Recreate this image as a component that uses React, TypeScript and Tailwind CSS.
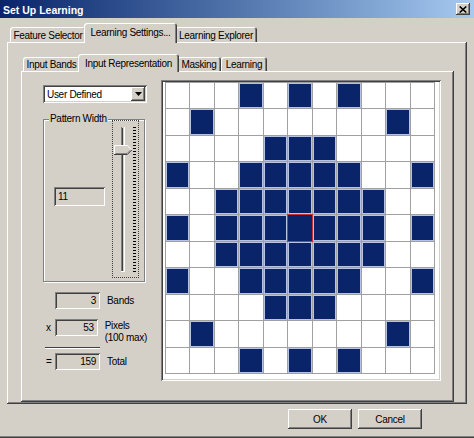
import React from "react";

const rows = [
  "...X.X.X...",
  ".X.......X.",
  "....XXX....",
  "X..XXXXX..X",
  "..XXXXXXX..",
  "X.XXXXXXX.X",
  "..XXXXXXX..",
  "X..XXXXX..X",
  "....XXX....",
  ".X.......X.",
  "...X.X.X...",
];

const sunken =
  "shadow-[inset_1px_1px_0_#808080,inset_-1px_-1px_0_#ffffff,inset_2px_2px_0_#404040,inset_-2px_-2px_0_#d4d0c8]";
const raised =
  "shadow-[inset_-1px_-1px_0_#404040,inset_1px_1px_0_#ffffff,inset_-2px_-2px_0_#808080,inset_2px_2px_0_#d4d0c8]";
const tabEdge =
  "rounded-t-[3px] shadow-[inset_1px_1px_0_#ffffff,inset_-1px_0_0_#404040,inset_-2px_0_0_#808080]";

function Tab({ label, cls, selected }: { label: string; cls: string; selected?: boolean }) {
  return (
    <div
      className={`${cls} ${tabEdge} bg-[#d4d0c8] flex justify-center whitespace-nowrap ${
        selected ? "relative z-10 -mx-[2px] -mb-px items-start pt-[3px]" : "items-center pt-px"
      }`}
    >
      {label}
    </div>
  );
}

function Slider() {
  const ticks = [];
  for (let i = 0; i < 49; i++) {
    ticks.push(<rect key={i} x={20} y={6 + i * 3} width={3} height={1} fill="#000" />);
  }
  return (
    <div className="ml-[7px] w-[27px] h-[158px] border border-dotted border-[#404040]">
      <svg width="25" height="156" viewBox="0 0 25 156" className="block">
        <rect x={8} y={6} width={1} height={145} fill="#808080" />
        <rect x={9} y={7} width={1} height={143} fill="#404040" />
        <rect x={11} y={6} width={1} height={145} fill="#ffffff" />
        <rect x={8} y={150} width={4} height={1} fill="#ffffff" />
        {ticks}
        <g transform="translate(1,24)">
          <polygon points="0,0 13,0 17.5,4.5 13,9 0,9" fill="#d4d0c8" />
          <polyline points="0.5,9 0.5,0.5 13.3,0.5 17.3,4.5" fill="none" stroke="#ffffff" strokeWidth="1" />
          <polyline points="0,9.5 13.3,9.5 17.8,5" fill="none" stroke="#404040" strokeWidth="1" />
          <polyline points="1.5,8.5 13,8.5 16.3,5.2" fill="none" stroke="#808080" strokeWidth="1" />
        </g>
      </svg>
    </div>
  );
}

export default function App() {
  return (
    <div className="w-[474px] h-[438px] bg-[#d4d0c8] flex flex-col overflow-hidden text-[10px] leading-[13px] tracking-[-0.3px] text-black font-['Liberation_Sans',Arial,sans-serif] shadow-[inset_0_-1px_0_#404040,inset_0_-2px_0_#808080]">
      {/* Title bar */}
      <div className="h-[18px] flex items-center justify-between pl-[3px] pr-[4px] bg-linear-to-r from-[#0a246a] to-[#a6caf0]">
        <span className="font-bold text-white text-[10.5px] tracking-[0px] pt-[2px]">Set Up Learning</span>
        <div className={`w-[14px] h-[12px] bg-[#d4d0c8] ${raised} flex items-center justify-center`}>
          <svg width="8" height="7" viewBox="0 0 8 7">
            <path d="M0.7 0.5L7.3 6.5M7.3 0.5L0.7 6.5" stroke="#000" strokeWidth="1.6" />
          </svg>
        </div>
      </div>

      <div className="pl-[7px]">
        {/* Outer tabs */}
        <div className="h-[24px] flex items-end pl-[3px]">
          <Tab label="Feature Selector" cls="w-[76px] h-[15px]" />
          <Tab label="Learning Settings..." cls="w-[93px] h-[20px]" selected />
          <Tab label="Learning Explorer" cls="w-[82px] h-[15px]" />
        </div>

        {/* Outer panel */}
        <div className={`w-[460px] h-[362px] ${raised} pl-[14px] flex flex-col`}>
          <div className="h-[29px] flex items-end pl-[2px]">
            <Tab label="Input Bands" cls="w-[57px] h-[14px]" />
            <Tab label="Input Representation" cls="w-[101px] h-[18px]" selected />
            <Tab label="Masking" cls="w-[44px] h-[14px]" />
            <Tab label="Learning" cls="w-[46px] h-[14px]" />
          </div>

          {/* Inner panel */}
          <div className={`w-[433px] h-[331px] ${raised} pl-[22px] flex items-start`}>
            {/* Left column */}
            <div className="mt-[14px] w-[104px] flex flex-col">
              <div className={`h-[18px] bg-white ${sunken} flex items-center pl-[4px] pr-[2px]`}>
                <span className="flex-1">User Defined</span>
                <div className={`w-[14px] h-[14px] bg-[#d4d0c8] ${raised} flex items-center justify-center`}>
                  <svg width="7" height="4" viewBox="0 0 7 4">
                    <path d="M0 0H7L3.5 4Z" fill="#000" />
                  </svg>
                </div>
              </div>

              <div className="relative mt-[16px] w-[102px] h-[163px] border border-[#808080] shadow-[1px_1px_0_#ffffff,inset_1px_1px_0_#ffffff] flex items-start">
                <span className="absolute left-[5px] -top-[8px] px-[1px] bg-[#d4d0c8] whitespace-nowrap">
                  Pattern Width
                </span>
                <div className={`ml-[10px] mt-[67px] w-[51px] h-[19px] ${sunken} flex items-center pl-[4px]`}>
                  11
                </div>
                <Slider />
              </div>

              <div className="mt-[10px] flex items-start">
                <span className="w-[12px]" />
                <div className={`w-[45px] h-[17px] ${sunken} flex items-center justify-end pr-[4px]`}>3</div>
                <span className="ml-[7px] leading-[17px]">Bands</span>
              </div>

              <div className="mt-[10px] flex items-start">
                <span className="w-[12px] leading-[17px] pl-[3px]">x</span>
                <div className={`w-[45px] h-[17px] ${sunken} flex items-center justify-end pr-[4px]`}>53</div>
                <div className="ml-[7px] flex flex-col pt-[1px] leading-[12px] whitespace-nowrap">
                  <span>Pixels</span>
                  <span>(100 max)</span>
                </div>
              </div>

              <div className="mt-[3px] ml-[2px] w-[55px] h-px bg-[#404040] shadow-[0_1px_0_#ffffff]" />

              <div className="mt-[5px] flex items-start">
                <span className="w-[12px] leading-[17px] pl-[3px]">=</span>
                <div className={`w-[45px] h-[17px] ${sunken} flex items-center justify-end pr-[4px]`}>159</div>
                <span className="ml-[7px] leading-[17px]">Total</span>
              </div>
            </div>

            {/* Grid */}
            <div className={`ml-[14px] mt-[9px] w-[280px] h-[301px] bg-white ${sunken} pl-[4px] pt-[2px]`}>
              <div className="w-[270px] h-[292px] grid grid-cols-[repeat(11,1fr)] grid-rows-[repeat(11,1fr)] gap-px bg-[#a0a0a0] p-px">
                {rows.map((r, ri) =>
                  r.split("").map((c, ci) => {
                    const on = c === "X";
                    const sel = ri === 5 && ci === 5;
                    if (!on) return <div key={`${ri}-${ci}`} className="bg-white" />;
                    if (sel)
                      return (
                        <div
                          key={`${ri}-${ci}`}
                          className="relative z-10 -m-px border border-[#c83232] bg-[#0a246a]"
                        />
                      );
                    return (
                      <div key={`${ri}-${ci}`} className="bg-[#b8c3e3] p-px">
                        <div className="w-full h-full bg-[#0a246a]" />
                      </div>
                    );
                  })
                )}
              </div>
            </div>
          </div>
        </div>
      </div>

      {/* Buttons */}
      <div className="mt-[5px] flex justify-end gap-[6px] pr-[52px]">
        <div className={`w-[64px] h-[20px] ${raised} flex items-center justify-center`}>OK</div>
        <div className={`w-[64px] h-[20px] ${raised} flex items-center justify-center`}>Cancel</div>
      </div>
    </div>
  );
}
